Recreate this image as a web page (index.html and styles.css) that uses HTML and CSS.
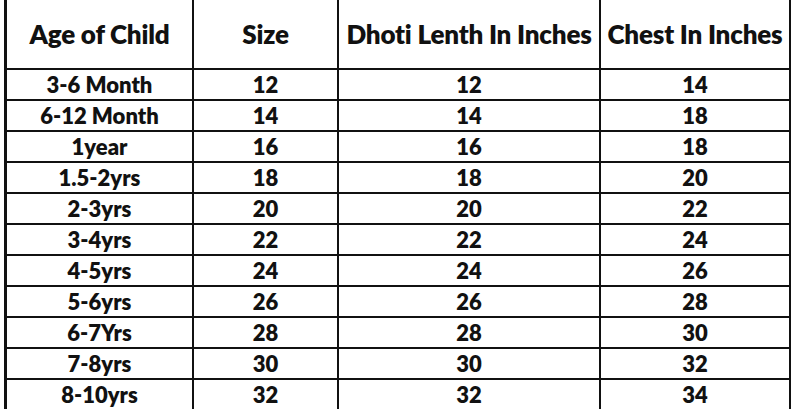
FILE: index.html
```html
<!DOCTYPE html>
<html>
<head>
<meta charset="utf-8">
<link rel="stylesheet" href="styles.css">
</head>
<body>
<table class="size-chart">
  <colgroup>
    <col class="c1"><col class="c2"><col class="c3"><col class="c4">
  </colgroup>
  <thead>
    <tr class="head">
      <th>Age of Child</th>
      <th>Size</th>
      <th>Dhoti Lenth In Inches</th>
      <th>Chest In Inches</th>
    </tr>
  </thead>
  <tbody>
    <tr><td>3-6 Month</td><td>12</td><td>12</td><td>14</td></tr>
    <tr><td>6-12 Month</td><td>14</td><td>14</td><td>18</td></tr>
    <tr><td>1year</td><td>16</td><td>16</td><td>18</td></tr>
    <tr><td>1.5-2yrs</td><td>18</td><td>18</td><td>20</td></tr>
    <tr><td>2-3yrs</td><td>20</td><td>20</td><td>22</td></tr>
    <tr><td>3-4yrs</td><td>22</td><td>22</td><td>24</td></tr>
    <tr><td>4-5yrs</td><td>24</td><td>24</td><td>26</td></tr>
    <tr><td>5-6yrs</td><td>26</td><td>26</td><td>28</td></tr>
    <tr><td>6-7Yrs</td><td>28</td><td>28</td><td>30</td></tr>
    <tr><td>7-8yrs</td><td>30</td><td>30</td><td>32</td></tr>
    <tr><td>8-10yrs</td><td>32</td><td>32</td><td>34</td></tr>
  </tbody>
</table>
</body>
</html>
```
FILE: styles.css
```css
html, body {
  margin: 0;
  padding: 0;
  background: #ffffff;
  overflow: hidden;
}

.size-chart {
  margin-left: 4px;
  border-left: 3px solid #111;
  border-collapse: separate;
  border-spacing: 0;
  table-layout: fixed;
  width: 787px;
  font-family: Lato, "Open Sans", sans-serif;
  font-weight: 800;
  font-variant-ligatures: none;
  color: #111;
}

.c1 { width: 187px; }
.c2 { width: 145px; }
.c3 { width: 262px; }
.c4 { width: 190px; }

.size-chart th,
.size-chart td {
  box-sizing: border-box;
  border-right: 2px solid #111;
  border-bottom: 2px solid #111;
  padding: 0;
  text-align: center;
  vertical-align: middle;
  white-space: nowrap;
  overflow: hidden;
}

.size-chart th {
  height: 70px;
  font-size: 26px;
  font-weight: 800;
  letter-spacing: -0.2px;
}

.size-chart td {
  height: 31px;
  font-size: 22px;
  line-height: 1;
}
```
